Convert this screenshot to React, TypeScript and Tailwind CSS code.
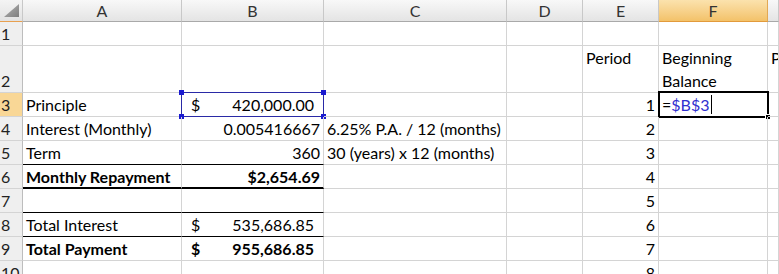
import React from "react";

const GRID = "border-r-[#d4d4d4]";
const GB = "border-b-[#d4d4d4]";

type CellProps = {
  w: string;
  bottom?: string;
  className?: string;
  children?: React.ReactNode;
};

function Cell({ w, bottom, className = "", children }: CellProps) {
  return (
    <div
      className={`relative box-border shrink-0 h-full border-r border-b ${GRID} ${bottom ?? GB} ${w} ${className}`}
    >
      {children}
    </div>
  );
}

const W = {
  A: "w-[159px]",
  B: "w-[142px]",
  C: "w-[183px]",
  D: "w-[76px]",
  E: "w-[76px]",
  F: "w-[109px]",
  G: "flex-1 min-w-0 overflow-hidden",
};

function RowHead({ n, active }: { n: string; active?: boolean }) {
  return (
    <div
      className={`box-border shrink-0 w-[23px] h-full border-r border-b border-r-[#bdbdbd] border-b-[#d4d4d4] pl-[1px] leading-[23px] text-[#222] overflow-hidden ${
        active ? "bg-[#f9d796]" : "bg-[#efefef]"
      }`}
    >
      {n}
    </div>
  );
}

function ColHead({ label, w, active }: { label: string; w: string; active?: boolean }) {
  return (
    <div
      className={`box-border shrink-0 h-full border-r border-b flex justify-center leading-[21px] ${
        active
          ? "bg-gradient-to-b from-[#fbe2ad] to-[#f3c269] border-r-[#e2a854] border-b-[#e29a3c] text-[#333]"
          : "bg-gradient-to-b from-[#f8f8f8] to-[#e4e4e4] border-r-[#c8c8c8] border-b-[#a9a9a9] text-[#333]"
      } ${w}`}
    >
      {label}
    </div>
  );
}

const T = "px-[3px] leading-[23px] whitespace-nowrap";
const BLACK = "border-b-black";
const BLACK2 = "border-b-2 border-b-black";

function Money({ v, bold }: { v: string; bold?: boolean }) {
  return (
    <div className={`flex justify-between pl-[9px] pr-[9px] leading-[23px] ${bold ? "font-bold" : ""}`}>
      <span>$</span>
      <span>{v}</span>
    </div>
  );
}

function Right({ children, bold }: { children: React.ReactNode; bold?: boolean }) {
  return <div className={`text-right ${T} ${bold ? "font-bold" : ""}`}>{children}</div>;
}

export default function App() {
  return (
    <div className="w-[779px] h-[274px] overflow-hidden bg-white text-black text-[16px] font-['Lato',sans-serif]">
      {/* header */}
      <div className="flex h-[22px]">
        <div className="box-border shrink-0 w-[23px] h-full border-r border-b border-r-[#c8c8c8] border-b-[#e8a050] bg-gradient-to-b from-[#f4f4f4] to-[#e2e2e2] relative">
          <svg className="absolute left-[4px] top-[4px]" width="15" height="13" viewBox="0 0 15 13">
            <defs>
              <linearGradient id="tri" x1="0" y1="0" x2="1" y2="1">
                <stop offset="0" stopColor="#b5b5b5" />
                <stop offset="1" stopColor="#7e7e7e" />
              </linearGradient>
            </defs>
            <polygon points="15,0 15,13 0,13" fill="url(#tri)" />
          </svg>
        </div>
        <ColHead label="A" w={W.A} />
        <ColHead label="B" w={W.B} />
        <ColHead label="C" w={W.C} />
        <ColHead label="D" w={W.D} />
        <ColHead label="E" w={W.E} />
        <ColHead label="F" w={W.F} active />
        <ColHead label="" w="flex-1" />
      </div>

      {/* row 1 */}
      <div className="flex h-[24px]">
        <RowHead n="1" />
        <Cell w={W.A} />
        <Cell w={W.B} />
        <Cell w={W.C} />
        <Cell w={W.D} />
        <Cell w={W.E} />
        <Cell w={W.F} />
        <Cell w={W.G} />
      </div>

      {/* row 2 */}
      <div className="flex h-[47px]">
        <div className="box-border shrink-0 w-[23px] h-full border-r border-b border-r-[#bdbdbd] border-b-[#d4d4d4] bg-[#efefef] pl-[1px] text-[#222] flex items-end leading-[23px]">
          2
        </div>
        <Cell w={W.A} />
        <Cell w={W.B} />
        <Cell w={W.C} />
        <Cell w={W.D} />
        <Cell w={W.E}>
          <div className={T}>Period</div>
        </Cell>
        <Cell w={W.F}>
          <div className={T}>Beginning</div>
          <div className={T}>Balance</div>
        </Cell>
        <Cell w={W.G}>
          <div className={T}>Payment</div>
        </Cell>
      </div>

      {/* row 3 */}
      <div className="flex h-[24px]">
        <RowHead n="3" active />
        <Cell w={W.A}>
          <div className={T}>Principle</div>
        </Cell>
        <Cell w={W.B}>
          <Money v="420,000.00" />
          <div className="absolute -inset-px border border-[#2a2aa6]">
            <div className="absolute -left-[3px] -top-[3px] w-[5px] h-[5px] bg-[#1a1ad0]" />
            <div className="absolute -right-[3px] -top-[3px] w-[5px] h-[5px] bg-[#1a1ad0]" />
            <div className="absolute -left-[3px] -bottom-[3px] w-[5px] h-[5px] bg-[#1a1ad0]" />
            <div className="absolute -right-[3px] -bottom-[3px] w-[5px] h-[5px] bg-[#1a1ad0]" />
          </div>
        </Cell>
        <Cell w={W.C} />
        <Cell w={W.D} />
        <Cell w={W.E}>
          <Right>1</Right>
        </Cell>
        <Cell w={W.F}>
          <div className={`${T} flex items-center h-full`}>
            <span className="text-black">=</span>
            <span className="text-[#3030d0]">$B$3</span>
            <span className="ml-[2px] w-px h-[19px] bg-black" />
          </div>
          <div className="absolute -left-px -top-[2px] -right-[2px] -bottom-[2px] border-2 border-black">
            <div className="absolute -right-[4px] -bottom-[4px] w-[6px] h-[6px] bg-black border border-white" />
          </div>
        </Cell>
        <Cell w={W.G} />
      </div>

      {/* row 4 */}
      <div className="flex h-[24px]">
        <RowHead n="4" />
        <Cell w={W.A}>
          <div className={T}>Interest (Monthly)</div>
        </Cell>
        <Cell w={W.B}>
          <Right>0.005416667</Right>
        </Cell>
        <Cell w={W.C}>
          <div className={T}>6.25% P.A. / 12 (months)</div>
        </Cell>
        <Cell w={W.D} />
        <Cell w={W.E}>
          <Right>2</Right>
        </Cell>
        <Cell w={W.F} />
        <Cell w={W.G} />
      </div>

      {/* row 5 */}
      <div className="flex h-[24px]">
        <RowHead n="5" />
        <Cell w={W.A} bottom={BLACK}>
          <div className={T}>Term</div>
        </Cell>
        <Cell w={W.B} bottom={BLACK}>
          <Right>360</Right>
        </Cell>
        <Cell w={W.C}>
          <div className={T}>30 (years) x 12 (months)</div>
        </Cell>
        <Cell w={W.D} />
        <Cell w={W.E}>
          <Right>3</Right>
        </Cell>
        <Cell w={W.F} />
        <Cell w={W.G} />
      </div>

      {/* row 6 */}
      <div className="flex h-[24px]">
        <RowHead n="6" />
        <Cell w={W.A} bottom={BLACK2}>
          <div className={`${T} font-bold`}>Monthly Repayment</div>
        </Cell>
        <Cell w={W.B} bottom={BLACK2}>
          <Right bold>$2,654.69</Right>
        </Cell>
        <Cell w={W.C} />
        <Cell w={W.D} />
        <Cell w={W.E}>
          <Right>4</Right>
        </Cell>
        <Cell w={W.F} />
        <Cell w={W.G} />
      </div>

      {/* row 7 */}
      <div className="flex h-[24px]">
        <RowHead n="7" />
        <Cell w={W.A} bottom={BLACK} />
        <Cell w={W.B} bottom={BLACK} />
        <Cell w={W.C} />
        <Cell w={W.D} />
        <Cell w={W.E}>
          <Right>5</Right>
        </Cell>
        <Cell w={W.F} />
        <Cell w={W.G} />
      </div>

      {/* row 8 */}
      <div className="flex h-[24px]">
        <RowHead n="8" />
        <Cell w={W.A} bottom={BLACK}>
          <div className={T}>Total Interest</div>
        </Cell>
        <Cell w={W.B} bottom={BLACK}>
          <Money v="535,686.85" />
        </Cell>
        <Cell w={W.C} />
        <Cell w={W.D} />
        <Cell w={W.E}>
          <Right>6</Right>
        </Cell>
        <Cell w={W.F} />
        <Cell w={W.G} />
      </div>

      {/* row 9 */}
      <div className="flex h-[24px]">
        <RowHead n="9" />
        <Cell w={W.A}>
          <div className={`${T} font-bold`}>Total Payment</div>
        </Cell>
        <Cell w={W.B}>
          <Money v="955,686.85" bold />
        </Cell>
        <Cell w={W.C} />
        <Cell w={W.D} />
        <Cell w={W.E}>
          <Right>7</Right>
        </Cell>
        <Cell w={W.F} />
        <Cell w={W.G} />
      </div>

      {/* row 10 */}
      <div className="flex h-[24px]">
        <RowHead n="10" />
        <Cell w={W.A} />
        <Cell w={W.B} />
        <Cell w={W.C} />
        <Cell w={W.D} />
        <Cell w={W.E}>
          <Right>8</Right>
        </Cell>
        <Cell w={W.F} />
        <Cell w={W.G} />
      </div>
    </div>
  );
}
